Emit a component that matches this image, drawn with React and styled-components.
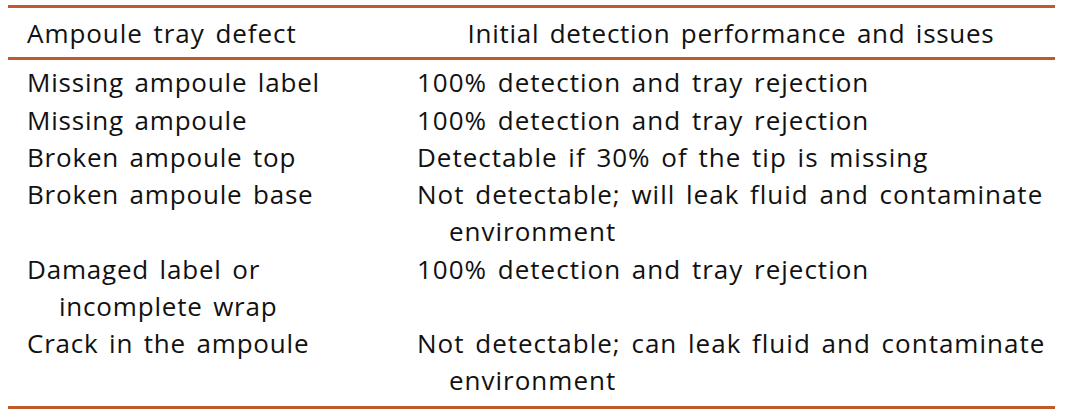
import styled, { createGlobalStyle } from "styled-components";

const GlobalStyle = createGlobalStyle`
  body {
    margin: 0;
    padding: 5px 8px 0;
    background: #fff;
    font-family: "Open Sans", "Noto Sans", sans-serif;
    color: #111;
  }
`;

const Table = styled.table`
  width: 1047px;
  border-collapse: collapse;
  font-size: 26px;
  line-height: 37.25px;
  word-spacing: 3px;
  border-top: 3px solid #c05a2b;
  border-bottom: 3px solid #c05a2b;
`;

const HeadRow = styled.tr`
  border-bottom: 3px solid #c05a2b;
`;

const HeadCell = styled.th`
  font-weight: 400;
  padding: 7px 0 5px;
  letter-spacing: ${({ $center }) => ($center ? "0.72px" : "0.95px")};
  text-align: ${({ $center }) => ($center ? "center" : "left")};
  padding-left: ${({ $center }) => ($center ? "0" : "19px")};
  padding-right: ${({ $center }) => ($center ? "10px" : "0")};
`;

const Cell = styled.td`
  vertical-align: top;
  padding: 0;
  padding-left: ${({ $first }) => ($first ? "19px" : "0")};
  width: ${({ $first }) => ($first ? "390px" : "auto")};
  letter-spacing: ${({ $first }) => ($first ? "0.8px" : "1px")};
  padding-top: ${({ $top }) => ($top ? "4px" : "0")};
  padding-bottom: ${({ $bottom }) => ($bottom ? "6px" : "0")};
`;

const Line = styled.div`
  white-space: nowrap;
  padding-left: ${({ $cont }) => ($cont ? "32px" : "0")};
`;

const rows = [
  { defect: ["Missing ampoule label"], result: ["100% detection and tray rejection"] },
  { defect: ["Missing ampoule"], result: ["100% detection and tray rejection"] },
  { defect: ["Broken ampoule top"], result: ["Detectable if 30% of the tip is missing"] },
  {
    defect: ["Broken ampoule base"],
    result: ["Not detectable; will leak fluid and contaminate", "environment"],
  },
  {
    defect: ["Damaged label or", "incomplete wrap"],
    result: ["100% detection and tray rejection"],
  },
  {
    defect: ["Crack in the ampoule"],
    result: ["Not detectable; can leak fluid and contaminate", "environment"],
  },
];

function Lines({ items }) {
  return items.map((text, i) => (
    <Line key={i} $cont={i > 0}>
      {text}
    </Line>
  ));
}

export default function App() {
  return (
    <>
      <GlobalStyle />
      <Table>
        <thead>
          <HeadRow>
            <HeadCell>Ampoule tray defect</HeadCell>
            <HeadCell $center>Initial detection performance and issues</HeadCell>
          </HeadRow>
        </thead>
        <tbody>
          {rows.map((row, i) => (
            <tr key={i}>
              <Cell $first $top={i === 0} $bottom={i === rows.length - 1}>
                <Lines items={row.defect} />
              </Cell>
              <Cell $top={i === 0} $bottom={i === rows.length - 1}>
                <Lines items={row.result} />
              </Cell>
            </tr>
          ))}
        </tbody>
      </Table>
    </>
  );
}
